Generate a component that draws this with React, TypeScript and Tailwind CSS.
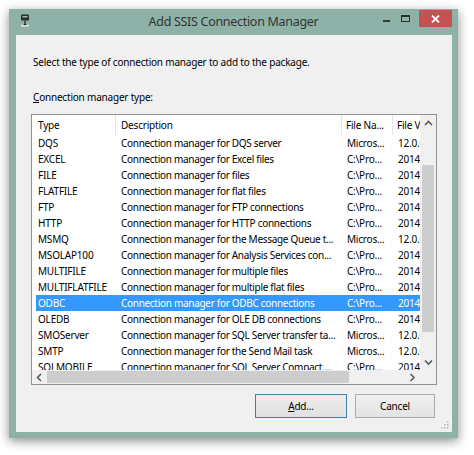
import React from "react";

type Row = { type: string; desc: string; file: string; ver: string };

const rows: Row[] = [
  { type: "DQS", desc: "Connection manager for DQS server", file: "Micros...", ver: "12.0.0.0" },
  { type: "EXCEL", desc: "Connection manager for Excel files", file: "C:\\Pro...", ver: "2014.0120" },
  { type: "FILE", desc: "Connection manager for files", file: "C:\\Pro...", ver: "2014.0120" },
  { type: "FLATFILE", desc: "Connection manager for flat files", file: "C:\\Pro...", ver: "2014.0120" },
  { type: "FTP", desc: "Connection manager for FTP connections", file: "C:\\Pro...", ver: "2014.0120" },
  { type: "HTTP", desc: "Connection manager for HTTP connections", file: "C:\\Pro...", ver: "2014.0120" },
  { type: "MSMQ", desc: "Connection manager for the Message Queue t...", file: "Micros...", ver: "12.0.0.0" },
  { type: "MSOLAP100", desc: "Connection manager for Analysis Services con...", file: "C:\\Pro...", ver: "2014.0120" },
  { type: "MULTIFILE", desc: "Connection manager for multiple files", file: "C:\\Pro...", ver: "2014.0120" },
  { type: "MULTIFLATFILE", desc: "Connection manager for multiple flat files", file: "C:\\Pro...", ver: "2014.0120" },
  { type: "ODBC", desc: "Connection manager for ODBC connections", file: "C:\\Pro...", ver: "2014.0120" },
  { type: "OLEDB", desc: "Connection manager for OLE DB connections", file: "C:\\Pro...", ver: "2014.0120" },
  { type: "SMOServer", desc: "Connection manager for SQL Server transfer ta...", file: "Micros...", ver: "12.0.0.0" },
  { type: "SMTP", desc: "Connection manager for the Send Mail task", file: "Micros...", ver: "12.0.0.0" },
  { type: "SQLMOBILE", desc: "Connection manager for SQL Server Compact ...", file: "C:\\Pro...", ver: "2014.0120" },
];

const font = { fontFamily: '"Noto Sans", "Open Sans", sans-serif' };

function Chevron({ dir }: { dir: "up" | "down" | "left" | "right" }) {
  const d = {
    up: "M1 5 L4.5 1.5 L8 5",
    down: "M1 1.5 L4.5 5 L8 1.5",
    left: "M5 1 L1.5 4.5 L5 8",
    right: "M1.5 1 L5 4.5 L1.5 8",
  }[dir];
  const vertical = dir === "up" || dir === "down";
  return (
    <svg width={vertical ? 9 : 7} height={vertical ? 7 : 9} viewBox={vertical ? "0 0 9 7" : "0 0 7 9"}>
      <path d={d} fill="none" stroke="#5a5a5a" strokeWidth="1.6" />
    </svg>
  );
}

function AppIcon() {
  return (
    <svg width="10" height="14" viewBox="0 0 10 14">
      <rect x="1" y="0.5" width="8" height="6" rx="1" fill="#2c2c2c" />
      <rect x="2.5" y="2" width="5" height="1.5" fill="#9ab7ae" />
      <rect x="4.3" y="6.5" width="1.4" height="4" fill="#2c2c2c" />
      <rect x="1.5" y="10.5" width="7" height="2" fill="#f2f2f2" />
      <rect x="3.5" y="10" width="3" height="1.2" fill="#2c2c2c" />
    </svg>
  );
}

export default function App() {
  return (
    <div className="w-[474px] h-[455px] bg-white pt-[9px] pl-[9px]" style={font}>
      <div className="w-[449px] h-[429px] bg-[#8fb2a8] flex flex-col shadow-[0_3px_10px_rgba(0,0,0,0.45)]">
        {/* title bar */}
        <div className="h-[26px] flex shrink-0">
          <div className="w-[81px] pl-[11px] pt-[5px]">
            <AppIcon />
          </div>
          <div className="flex-1 text-center text-[12.5px] tracking-[-0.3px] leading-[26px] text-[#333]">
            Add SSIS Connection Manager
          </div>
          <div className="w-[81px] flex items-start justify-end pr-[6px] pt-[1px]">
            <div className="w-[22px] h-[17px] flex items-center justify-center pt-[5px]">
              <div className="w-[7px] h-[2px] bg-[#3a3a3a]" />
            </div>
            <div className="w-[22px] h-[17px] flex items-center justify-center mr-[4px]">
              <div className="w-[9px] h-[7px] border border-[#2f2f2f] border-t-2" />
            </div>
            <div className="w-[38px] h-[17px] bg-[#c75050] flex items-center justify-center">
              <svg width="9" height="8" viewBox="0 0 9 8">
                <path d="M1 0.5 L8 7.5 M8 0.5 L1 7.5" stroke="#fff" strokeWidth="1.8" />
              </svg>
            </div>
          </div>
        </div>

        {/* client area */}
        <div className="ml-[7px] w-[436px] h-[397px] bg-[#f0f0f0] flex flex-col relative text-[10px] tracking-[-0.2px] text-black">
          <div className="pl-[17px] pt-[19px] leading-[16px]">
            Select the type of connection manager to add to the package.
          </div>
          <div className="pl-[17px] mt-[19px] leading-[16px]">
            <span className="underline">C</span>onnection manager type:
          </div>

          {/* list view */}
          <div className="ml-[15px] mt-[9px] w-[406px] h-[271px] border border-[#8e9299] bg-white flex">
            <div className="w-[388px] flex flex-col">
              <div className="h-[20px] flex items-center shrink-0 leading-[16px]">
                <div className="w-[84px] pl-[6px] border-r border-[#e5e5e5] h-full flex items-center">Type</div>
                <div className="w-[226px] pl-[5px] border-r border-[#e5e5e5] h-full flex items-center">Description</div>
                <div className="w-[51px] pl-[4px] border-r border-[#e5e5e5] h-full flex items-center whitespace-nowrap overflow-hidden">File Na...</div>
                <div className="flex-1 pl-[4px] h-full flex items-center overflow-hidden whitespace-nowrap">File Version</div>
              </div>
              <div className="h-[235px] overflow-hidden">
                {rows.map((r) => {
                  const sel = r.type === "ODBC";
                  return (
                    <div
                      key={r.type}
                      className={`ml-[4px] h-[16px] flex items-center leading-[16px] whitespace-nowrap ${
                        sel ? "bg-[#3399ff] text-white" : ""
                      }`}
                    >
                      <div className="w-[80px] pl-[2px] overflow-hidden">{r.type}</div>
                      <div className="w-[226px] pl-[5px] overflow-hidden tracking-[-0.3px]">{r.desc}</div>
                      <div className="w-[51px] pl-[5px] overflow-hidden">{r.file}</div>
                      <div className="flex-1 pl-[5px] overflow-hidden">{r.ver}</div>
                    </div>
                  );
                })}
              </div>
              {/* horizontal scrollbar */}
              <div className="h-[14px] bg-[#f0f0f0] flex items-center shrink-0">
                <div className="w-[15px] flex items-center justify-center">
                  <Chevron dir="left" />
                </div>
                <div className="w-[302px] h-[12px] bg-[#cdcdcd]" />
                <div className="flex-1" />
                <div className="w-[16px] flex items-center justify-center">
                  <Chevron dir="right" />
                </div>
              </div>
            </div>

            {/* vertical scrollbar */}
            <div className="flex-1 flex flex-col">
              <div className="h-[255px] bg-[#f0f0f0] flex flex-col items-center">
                <div className="h-[17px] w-full flex items-center justify-center">
                  <Chevron dir="up" />
                </div>
                <div className="mt-[33px] w-[12px] h-[167px] bg-[#cdcdcd]" />
                <div className="flex-1" />
                <div className="h-[16px] w-full flex items-center justify-center">
                  <Chevron dir="down" />
                </div>
              </div>
              <div className="flex-1 bg-[#f0f0f0]" />
            </div>
          </div>

          {/* buttons */}
          <div className="mt-[9px] flex pl-[239px] gap-[8px]">
            <button className="w-[92px] h-[24px] border border-[#3c7fb1] bg-gradient-to-b from-[#ececec] to-[#e2e2e2] text-[10px] text-black leading-[16px]">
              <span className="underline">A</span>dd...
            </button>
            <button className="w-[80px] h-[24px] border border-[#acacac] bg-gradient-to-b from-[#f0f0f0] to-[#e3e3e3] text-[10px] text-black leading-[16px]">
              Cancel
            </button>
          </div>

          {/* resize grip */}
          <svg className="absolute right-[2px] bottom-[2px]" width="10" height="10" viewBox="0 0 10 10">
            {[
              [8, 2], [8, 5], [8, 8], [5, 5], [5, 8], [2, 8],
            ].map(([x, y]) => (
              <rect key={`${x}-${y}`} x={x - 1} y={y - 1} width="1.5" height="1.5" fill="#b5b5b5" />
            ))}
          </svg>
        </div>
      </div>
    </div>
  );
}
